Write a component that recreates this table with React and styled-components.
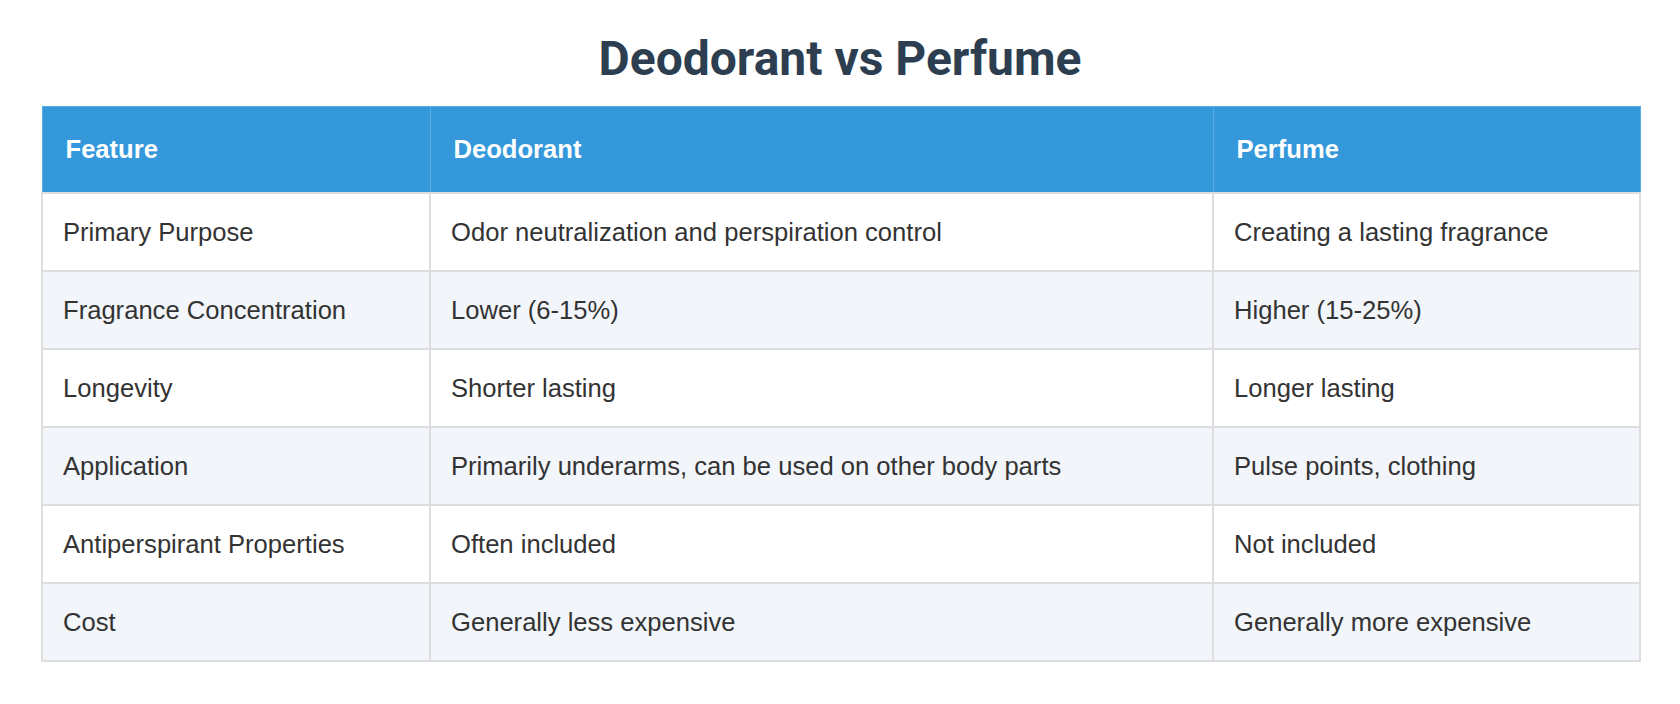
import styled, { createGlobalStyle } from "styled-components";

const rows = [
  ["Primary Purpose", "Odor neutralization and perspiration control", "Creating a lasting fragrance"],
  ["Fragrance Concentration", "Lower (6-15%)", "Higher (15-25%)"],
  ["Longevity", "Shorter lasting", "Longer lasting"],
  ["Application", "Primarily underarms, can be used on other body parts", "Pulse points, clothing"],
  ["Antiperspirant Properties", "Often included", "Not included"],
  ["Cost", "Generally less expensive", "Generally more expensive"],
];

export default function App() {
  return (
    <>
      <GlobalStyle />
      <Page>
        <Title>Deodorant vs Perfume</Title>
        <Table>
          <colgroup>
            <col style={{ width: 388 }} />
            <col style={{ width: 783 }} />
            <col style={{ width: 427 }} />
          </colgroup>
          <thead>
            <tr>
              <HeadCell>Feature</HeadCell>
              <HeadCell>Deodorant</HeadCell>
              <HeadCell>Perfume</HeadCell>
            </tr>
          </thead>
          <tbody>
            {rows.map((row, i) => (
              <Row key={row[0]} striped={i % 2 === 1}>
                {row.map((cell) => (
                  <Cell key={cell}>{cell}</Cell>
                ))}
              </Row>
            ))}
          </tbody>
        </Table>
      </Page>
    </>
  );
}

//style
const GlobalStyle = createGlobalStyle`
  body {
    margin: 0;
    background: #ffffff;
    font-family: "Liberation Sans", Arial, sans-serif;
  }
`;

const Page = styled.div`
  padding: 0 41px;
`;

const Title = styled.h1`
  margin: 31px 0 19px;
  font-family: Roboto, "Liberation Sans", sans-serif;
  font-size: 48px;
  line-height: 56px;
  font-weight: 700;
  color: #2c3e50;
  text-align: center;
`;

const Table = styled.table`
  width: 1598px;
  border-collapse: collapse;
  table-layout: fixed;
`;

const HeadCell = styled.th`
  padding: 28px 23px;
  background: #3498db;
  color: #ffffff;
  font-size: 25.6px;
  font-weight: 700;
  text-align: left;
  border: 1px solid #5aa9e0;
`;

const Row = styled.tr`
  background: ${({ striped }) => (striped ? "#f2f5f9" : "#ffffff")};
`;

const Cell = styled.td`
  padding: 24px 20px 23px;
  font-size: 25.6px;
  color: #333333;
  border: 2px solid #dedede;
`;
